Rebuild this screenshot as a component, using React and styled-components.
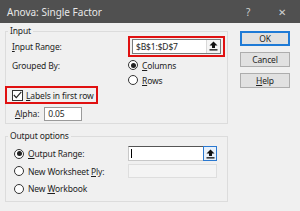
import styled, { createGlobalStyle } from 'styled-components';

const GlobalStyle = createGlobalStyle`
    *, *::before, *::after {
        box-sizing: border-box;
    }
    html, body {
        margin: 0;
        padding: 0;
        background: #f0f0f0;
    }
    body {
        font-family: "Noto Sans", "Open Sans", sans-serif;
        font-size: 8.5px;
        letter-spacing: -0.15px;
        color: #1e1e1e;
    }
`;

function UploadIcon(){
    return (
        <svg width="9" height="10" viewBox="0 0 9 10">
            <path d="M4.5 0.5 L8.5 4.5 L6 4.5 L6 7 L3 7 L3 4.5 L0.5 4.5 Z" fill="#111"/>
            <rect x="0.5" y="8.2" width="8" height="1.3" fill="#111"/>
        </svg>
    );
}

function Radio({checked, children}){
    return (
        <RadioRow>
            <RadioCircle>{checked && <RadioDot/>}</RadioCircle>
            <span>{children}</span>
        </RadioRow>
    );
}

function App(){
    return (
        <Dialog>
            <GlobalStyle/>
            <TitleBar>
                <Title>Anova: Single Factor</Title>
                <TitleButtons>
                    <TitleButton>?</TitleButton>
                    <TitleButton $close>✕</TitleButton>
                </TitleButtons>
            </TitleBar>
            <Body>
                <LeftColumn>
                    <Group>
                        <Legend>Input</Legend>
                        <FieldRow $height={20}>
                            <FieldLabel><u>I</u>nput Range:</FieldLabel>
                            <Highlight>
                                <RangeBox>
                                    <RangeText>$B$1:$D$7</RangeText>
                                    <PickButton><UploadIcon/></PickButton>
                                </RangeBox>
                            </Highlight>
                        </FieldRow>
                        <FieldRow $height={18}>
                            <FieldLabel>Grouped By:</FieldLabel>
                            <Radio checked><u>C</u>olumns</Radio>
                        </FieldRow>
                        <FieldRow $height={12}>
                            <FieldLabel/>
                            <Radio><u>R</u>ows</Radio>
                        </FieldRow>
                        <CheckHighlight>
                            <CheckBox>
                                <svg width="9" height="8" viewBox="0 0 9 8">
                                    <path d="M0.8 4 L3.3 6.6 L8.3 0.8" stroke="#222" strokeWidth="1.1" fill="none"/>
                                </svg>
                            </CheckBox>
                            <span><u>L</u>abels in first row</span>
                        </CheckHighlight>
                        <AlphaRow>
                            <span><u>A</u>lpha:</span>
                            <AlphaInput>0.05</AlphaInput>
                        </AlphaRow>
                    </Group>
                    <Group $top={4} $bottom={4}>
                        <Legend>Output options</Legend>
                        <FieldRow $height={17}>
                            <FieldLabel $indent={8}><Radio checked><u>O</u>utput Range:</Radio></FieldLabel>
                            <RangeBox $active>
                                <Caret/>
                                <PickButton $active><UploadIcon/></PickButton>
                            </RangeBox>
                        </FieldRow>
                        <FieldRow $height={18}>
                            <FieldLabel $indent={8}><Radio>New Worksheet <u>P</u>ly:</Radio></FieldLabel>
                            <DisabledBox/>
                        </FieldRow>
                        <FieldRow $height={17}>
                            <FieldLabel $indent={8}><Radio>New <u>W</u>orkbook</Radio></FieldLabel>
                        </FieldRow>
                    </Group>
                </LeftColumn>
                <ButtonColumn>
                    <Button $primary>OK</Button>
                    <Button>Cancel</Button>
                    <Button><u>H</u>elp</Button>
                </ButtonColumn>
            </Body>
        </Dialog>
    );
}

const Dialog = styled.div`
    display: flex;
    flex-direction: column;
    width: 300px;
    height: 211px;
    background: #f0f0f0;
    overflow: hidden;
`;
const TitleBar = styled.div`
    display: flex;
    align-items: center;
    justify-content: space-between;
    height: 23px;
    padding: 0 0 0 7px;
    background: #505050;
    color: #e8e8e8;
    flex-shrink: 0;
`;
const Title = styled.div`
    font-size: 10px;
    letter-spacing: 0;
`;
const TitleButtons = styled.div`
    display: flex;
    height: 100%;
`;
const TitleButton = styled.div`
    display: flex;
    align-items: center;
    justify-content: center;
    width: ${props => props.$close ? '36px' : '32px'};
    font-size: 10px;
    color: #d0d0d0;
`;
const Body = styled.div`
    display: flex;
    gap: 12px;
    padding: 3px 0 0 5px;
`;
const LeftColumn = styled.div`
    display: flex;
    flex-direction: column;
    gap: 7px;
    width: 223px;
    flex-shrink: 0;
`;
const Group = styled.fieldset`
    width: 223px;
    margin: 0;
    padding: ${props => props.$top || 0}px 0 ${props => props.$bottom || 0}px 0;
    border: 1px solid #dcdcdc;
    min-width: 0;
`;
const Legend = styled.legend`
    padding: 0 2px;
    margin-left: 2px;
    line-height: 10px;
`;
const FieldRow = styled.div`
    display: flex;
    align-items: center;
    height: ${props => props.$height}px;
`;
const FieldLabel = styled.div`
    width: 122px;
    flex-shrink: 0;
    padding-left: ${props => props.$indent || 6}px;
    white-space: nowrap;
`;
const Highlight = styled.div`
    display: flex;
    padding: 1px 2px;
    border: 2px solid #e01010;
`;
const RangeBox = styled.div`
    display: flex;
    align-items: center;
    justify-content: space-between;
    width: 89px;
    height: 15px;
    background: #fff;
    border: 1px solid ${props => props.$active ? '#c8c8c8' : '#7a7a7a'};
    ${props => props.$active && 'border-top-color: #555;'}
`;
const RangeText = styled.span`
    padding-left: 3px;
`;
const Caret = styled.span`
    width: 1px;
    height: 9px;
    margin-left: 2px;
    background: #000;
`;
const PickButton = styled.div`
    display: flex;
    align-items: center;
    justify-content: center;
    width: 14px;
    height: 100%;
    background: #f5f5f5;
    border-left: 1px solid #d8d8d8;
    ${props => props.$active && 'border: 1px solid #2a78d0; background: #e8f1fb; height: 15px; margin-right: -1px;'}
`;
const DisabledBox = styled.div`
    width: 89px;
    height: 14px;
    background: #f4f4f4;
    border: 1px solid #dedede;
`;
const RadioRow = styled.div`
    display: flex;
    align-items: center;
    gap: 4px;
    white-space: nowrap;
`;
const RadioCircle = styled.span`
    display: flex;
    align-items: center;
    justify-content: center;
    flex-shrink: 0;
    width: 10px;
    height: 10px;
    border: 1px solid #333;
    border-radius: 50%;
    background: #fff;
`;
const RadioDot = styled.span`
    width: 5px;
    height: 5px;
    border-radius: 50%;
    background: #222;
`;
const CheckHighlight = styled.div`
    display: flex;
    align-items: center;
    gap: 3px;
    width: fit-content;
    height: 18px;
    margin-left: -1px;
    padding: 0 2px 0 5px;
    border: 2px solid #e01010;
    white-space: nowrap;
`;
const CheckBox = styled.span`
    display: flex;
    align-items: center;
    justify-content: center;
    flex-shrink: 0;
    width: 11px;
    height: 11px;
    border: 1px solid #333;
    background: #fff;
`;
const AlphaRow = styled.div`
    display: flex;
    align-items: center;
    gap: 5px;
    height: 19px;
    padding-left: 9px;
`;
const AlphaInput = styled.div`
    width: 38px;
    height: 14px;
    padding-left: 3px;
    line-height: 12px;
    background: #fff;
    border: 1px solid #9a9a9a;
`;
const ButtonColumn = styled.div`
    display: flex;
    flex-direction: column;
    gap: 6px;
    padding-top: 5px;
`;
const Button = styled.div`
    display: flex;
    align-items: center;
    justify-content: center;
    width: 50px;
    height: 15px;
    background: #e1e1e1;
    border: 1px solid ${props => props.$primary ? '#1e7ad6' : '#adadad'};
    ${props => props.$primary && 'box-shadow: inset 0 0 0 1px #1e7ad6;'}
`;

export default App;
